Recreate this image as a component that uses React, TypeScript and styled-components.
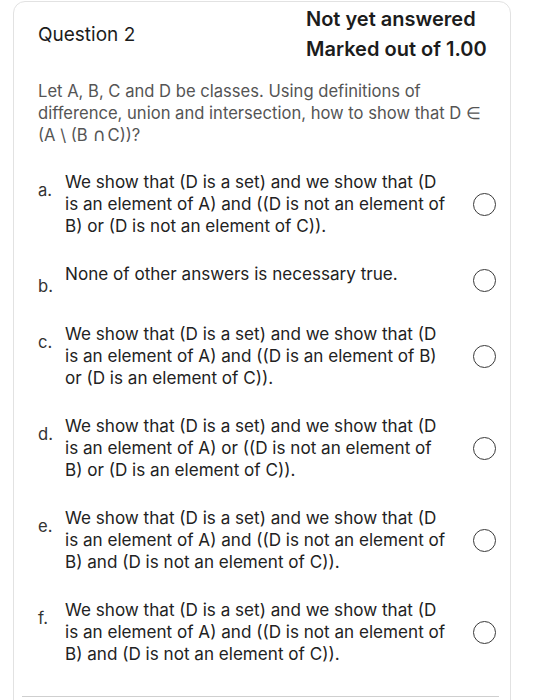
import styled, { createGlobalStyle } from "styled-components";

const GlobalStyle = createGlobalStyle`
  body {
    margin: 0;
    background: #fff;
    font-family: Inter, "Liberation Sans", Arial, sans-serif;
  }
`;

type Option = { letter: string; text: string; labelOffset?: number };

const options: Option[] = [
  {
    letter: "a.",
    text: "We show that (D is a set) and we show that (D is an element of A) and ((D is not an element of B) or (D is not an element of C)).",
  },
  { letter: "b.", text: "None of other answers is necessary true.", labelOffset: 12 },
  {
    letter: "c.",
    text: "We show that (D is a set) and we show that (D is an element of A) and ((D is an element of B) or (D is an element of C)).",
  },
  {
    letter: "d.",
    text: "We show that (D is a set) and we show that (D is an element of A) or ((D is not an element of B) or (D is an element of C)).",
  },
  {
    letter: "e.",
    text: "We show that (D is a set) and we show that (D is an element of A) and ((D is not an element of B) and (D is not an element of C)).",
  },
  {
    letter: "f.",
    text: "We show that (D is a set) and we show that (D is an element of A) and ((D is not an element of B) and (D is not an element of C)).",
  },
];

export default function App() {
  return (
    <>
      <GlobalStyle />
      <Card>
        <Header>
          <Title>Question 2</Title>
          <Status>
            <span>Not yet answered</span>
            <span>Marked out of 1.00</span>
          </Status>
        </Header>
        <Prompt>
          Let A, B, C and D be classes. Using definitions of difference, union
          and intersection, how to show that D ∈ (A \ (B <Sym>∩</Sym>C))?
        </Prompt>
        <Options>
          {options.map((o) => (
            <Row key={o.letter} $single={!o.text.startsWith("We")}>
              <Letter $offset={o.labelOffset ?? 8}>{o.letter}</Letter>
              <Answer>{o.text}</Answer>
              <Radio />
            </Row>
          ))}
        </Options>
        <Divider />
      </Card>
    </>
  );
}

const Card = styled.div`
  margin: 1px 0 0 13px;
  width: 498px;
  height: 720px;
  border: 1px solid #e2e2e2;
  border-radius: 12px;
  box-sizing: border-box;
  padding: 2px 0 0 24px;
  overflow: hidden;
`;

const Header = styled.div`
  display: flex;
  justify-content: space-between;
  align-items: center;
`;

const Title = styled.div`
  font-size: 19px;
  color: #1c1c1c;
`;

const Status = styled.div`
  display: flex;
  flex-direction: column;
  width: 204px;
  font-size: 20px;
  font-weight: 600;
  line-height: 30px;
  color: #1c1c1c;
`;

const Prompt = styled.p`
  margin: 16px 20px 0 0;
  font-size: 16.6px;
  line-height: 22px;
  color: #555;
`;

const Sym = styled.span`
  font-family: "DejaVu Sans", sans-serif;
  font-size: 18px;
  line-height: 1;
  margin-right: 2px;
`;

const Options = styled.div`
  display: flex;
  flex-direction: column;
  gap: 26px;
  margin-top: 25px;
`;

const Row = styled.div<{ $single: boolean }>`
  display: grid;
  grid-template-columns: 27px 382px 1fr;
  align-items: start;
  min-height: ${(p) => (p.$single ? "32px" : "0")};
  padding-right: 14px;
`;

const Letter = styled.div<{ $offset: number }>`
  font-size: 16.6px;
  line-height: 22px;
  color: #333;
  padding-top: ${(p) => p.$offset}px;
`;

const Answer = styled.div`
  font-size: 17.1px;
  line-height: 22px;
  color: #222;
`;

const Radio = styled.span`
  align-self: center;
  justify-self: end;
  width: 23px;
  height: 23px;
  box-sizing: border-box;
  border: 1.5px solid #3a3a3a;
  border-radius: 50%;
`;

const Divider = styled.div`
  margin: 31px 11px 0 -16px;
  height: 1px;
  background: #cfcfcf;
`;
